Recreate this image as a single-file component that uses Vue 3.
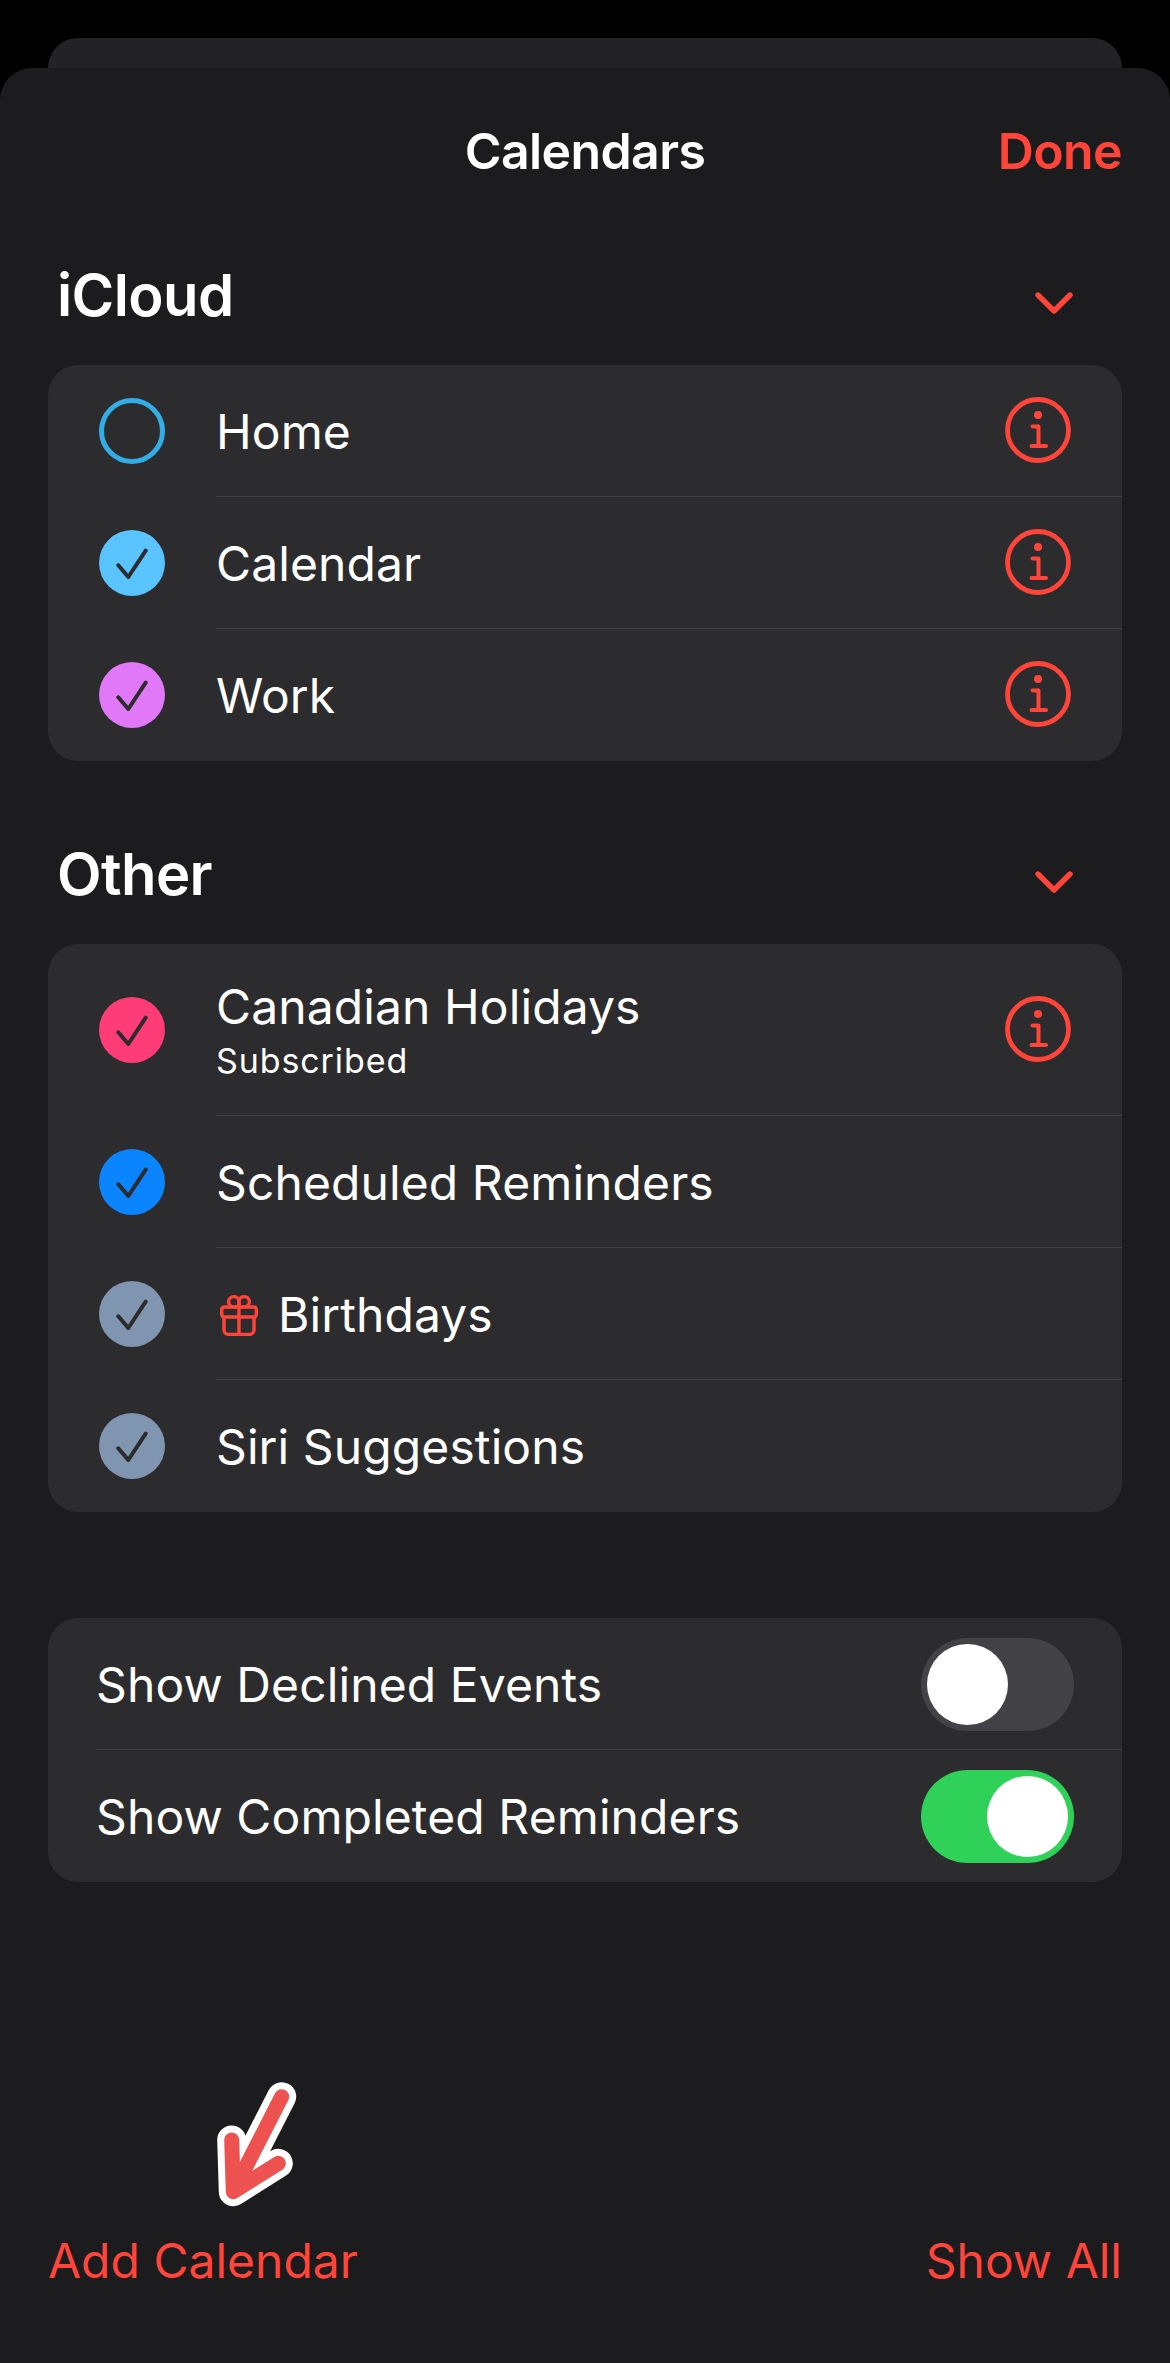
<script setup>
const icloud = [
  { name: 'Home', color: '#32ade6', off: true, info: true },
  { name: 'Calendar', color: '#5ac4fe', info: true },
  { name: 'Work', color: '#e178f8', info: true },
]
const other = [
  { name: 'Canadian Holidays', sub: 'Subscribed', color: '#ff3b78', info: true },
  { name: 'Scheduled Reminders', color: '#0a84ff' },
  { name: 'Birthdays', color: '#8095b0', gift: true },
  { name: 'Siri Suggestions', color: '#8095b0' },
]
const sections = [
  { title: 'iCloud', rows: icloud },
  { title: 'Other', rows: other },
]
</script>

<template>
  <div class="screen">
    <div class="back-card"></div>
    <main class="sheet">
      <header class="nav">
        <h1 class="nav-title">Calendars</h1>
        <span class="done">Done</span>
      </header>

      <section v-for="s in sections" :key="s.title" class="section">
        <div class="section-head">
          <h2>{{ s.title }}</h2>
          <svg class="chevron" width="38" height="24" viewBox="0 0 38 24" fill="none">
            <path d="M3 4 L19 20 L35 4" stroke="#ff453a" stroke-width="5.4" stroke-linecap="round" stroke-linejoin="round" />
          </svg>
        </div>
        <div class="group">
          <div v-for="r in s.rows" :key="r.name" class="row" :class="{ tall: r.sub }">
            <span class="dot" :class="{ off: r.off }" :style="r.off ? { borderColor: r.color } : { background: r.color }">
              <svg v-if="!r.off" width="32" height="32" viewBox="0 0 32 32" fill="none">
                <path d="M2.3 18.3 L12.3 30 L29.7 3.7" stroke="#2c2c2e" stroke-width="4" stroke-linecap="round" stroke-linejoin="round" />
              </svg>
            </span>
            <div class="row-body">
              <div class="label">
                <div class="line">
                  <svg v-if="r.gift" class="gift" width="38" height="41" viewBox="0 0 38 41" fill="none" stroke="#ff453a" stroke-width="3.4" stroke-linejoin="round">
                    <rect x="1.7" y="12" width="34.6" height="10" rx="2.5" />
                    <path d="M4 22 V35 a4.4 4.4 0 0 0 4.4 4.4 H29.6 a4.4 4.4 0 0 0 4.4 -4.4 V22" />
                    <path d="M19 12 V39.4" />
                    <path d="M19 12 H13.5 a5.2 5.2 0 1 1 5.5 -5.5 Z" />
                    <path d="M19 12 H24.5 a5.2 5.2 0 1 0 -5.5 -5.5 Z" />
                  </svg>
                  <span>{{ r.name }}</span>
                </div>
                <div v-if="r.sub" class="sub">{{ r.sub }}</div>
              </div>
              <svg v-if="r.info" class="info" width="66" height="66" viewBox="0 0 66 66" fill="none">
                <circle cx="33" cy="33" r="30.5" stroke="#ff453a" stroke-width="4.8" />
                <circle cx="33" cy="18" r="4" fill="#ff453a" />
                <path d="M27.5 29.5 H33.5 V49 M26.5 49 H41" stroke="#ff453a" stroke-width="4" stroke-linecap="round" stroke-linejoin="round" />
              </svg>
            </div>
          </div>
        </div>
      </section>

      <div class="group settings">
        <div class="set-row">
          <span class="set-label">Show Declined Events</span>
          <span class="switch"><i class="knob"></i></span>
        </div>
        <div class="set-row">
          <span class="set-label">Show Completed Reminders</span>
          <span class="switch on"><i class="knob"></i></span>
        </div>
      </div>

      <footer class="foot">
        <span class="foot-link">Add Calendar</span>
        <span class="foot-link">Show All</span>
        <svg class="arrow" width="95" height="135" viewBox="0 0 95 135" fill="none">
          <path d="M71.7 16.7 L24 110 M21.7 60 L23.3 111.7 L68.3 83.3" stroke="#fff" stroke-width="29" stroke-linecap="round" stroke-linejoin="round" />
          <path d="M71.7 16.7 L24 110 M21.7 60 L23.3 111.7 L68.3 83.3" stroke="#ee5250" stroke-width="15" stroke-linecap="round" stroke-linejoin="round" />
        </svg>
      </footer>
    </main>
  </div>
</template>

<style scoped>
.screen {
  position: relative;
  width: 1170px;
  height: 2363px;
  background: #000;
  padding-top: 68px;
  box-sizing: border-box;
  overflow: hidden;
  font-family: Inter, "Liberation Sans", sans-serif;
  color: #fff;
}
.back-card {
  position: absolute;
  left: 48px;
  right: 48px;
  top: 38px;
  height: 60px;
  border-radius: 30px 30px 0 0;
  background: #232325;
}
.sheet {
  position: relative;
  height: 2295px;
  box-sizing: border-box;
  background: #1c1c1e;
  border-radius: 32px 32px 0 0;
  padding: 0 48px;
  display: flex;
  flex-direction: column;
}
.nav {
  height: 100px;
  margin-top: 33px;
  display: flex;
  align-items: center;
  justify-content: center;
  position: relative;
}
.nav-title {
  margin: 0;
  font-size: 50px;
  font-weight: 600;
  letter-spacing: -0.6px;
}
.done {
  position: absolute;
  right: 0;
  font-size: 50px;
  font-weight: 600;
  letter-spacing: -0.6px;
  color: #ff453a;
}
.section-head {
  height: 164px;
  display: flex;
  align-items: flex-end;
  justify-content: space-between;
  padding: 0 49px 0 9px;
}
.section-head h2 {
  margin: 0;
  font-size: 58px;
  font-weight: 600;
  letter-spacing: -0.6px;
  line-height: 66px;
  padding-bottom: 37px;
}
.chevron {
  margin-bottom: 50px;
}
.section + .section { margin-top: 50px; }
.section + .section .section-head { height: 133px; }
.group {
  background: #2c2c2e;
  border-radius: 30px;
  overflow: hidden;
}
.row {
  display: flex;
  align-items: center;
  height: 132px;
  padding-left: 51px;
}
.row.tall { height: 172px; }
.dot {
  flex: none;
  width: 66px;
  height: 66px;
  border-radius: 50%;
  box-sizing: border-box;
  display: flex;
  align-items: center;
  justify-content: center;
  margin-right: 51px;
}
.dot.off {
  border: 5px solid;
}
.row-body {
  flex: 1;
  align-self: stretch;
  display: flex;
  align-items: center;
  justify-content: space-between;
  padding-right: 51px;
  margin-top: -1px;
  border-top: 1.5px solid #3f3f42;
}
.row:first-child .row-body { border-top-color: transparent; }
.info { margin-bottom: 2px; }
.line {
  display: flex;
  align-items: center;
}
.label { font-size: 48px; line-height: 60px; letter-spacing: 0.1px; padding-top: 2px; }
.gift { margin: 0 20px 0 4px; }
.sub {
  font-size: 34px;
  line-height: 40px;
  letter-spacing: 0.9px;
  margin: 4px 0;
}
.settings { margin-top: 106px; }
.set-row {
  box-sizing: border-box;
  height: 132px;
  margin-left: 48px;
  display: flex;
  align-items: center;
  justify-content: space-between;
  padding-right: 48px;
  font-size: 48px;
  letter-spacing: 0.1px;
}
.set-row + .set-row {
  margin-top: -1px;
  height: 133px;
  border-top: 1.5px solid #3f3f42;
}
.switch {
  width: 153px;
  height: 93px;
  border-radius: 47px;
  background: #434347;
  position: relative;
}
.switch.on { background: #30d158; }
.knob {
  position: absolute;
  top: 6px;
  left: 6px;
  width: 81px;
  height: 81px;
  border-radius: 50%;
  background: #fff;
}
.switch.on .knob { left: 66px; }
.foot {
  position: relative;
  margin-top: auto;
  margin-bottom: 72px;
  display: flex;
  justify-content: space-between;
}
.foot-link {
  font-size: 48px;
  line-height: 60px;
  color: #ff453a;
}
.arrow {
  position: absolute;
  left: 162px;
  top: -151px;
}
</style>

<style>
html, body { margin: 0; background: #000; }
</style>
